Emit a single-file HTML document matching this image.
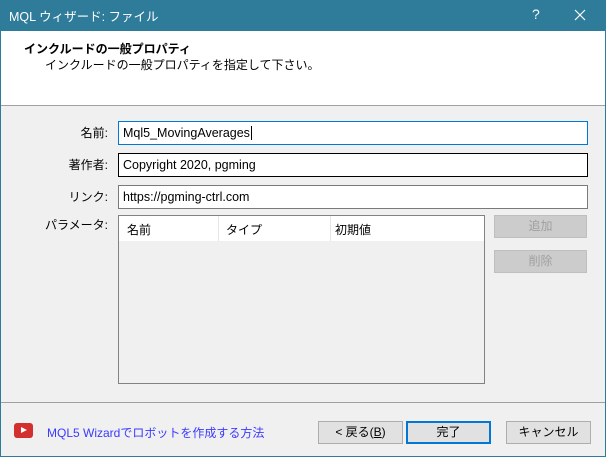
<!DOCTYPE html>
<html><head><meta charset="utf-8"><style>
*{margin:0;padding:0;box-sizing:border-box}
body{width:606px;height:457px;overflow:hidden;background:#f0f0f0;font-family:"Liberation Sans","Noto Sans CJK JP",sans-serif;font-size:12px;color:#000;position:relative}
.a{position:absolute}
.tb{left:0;top:0;width:606px;height:31px;background:#2e7b9a;color:#fff}
.win{left:0;top:0;width:606px;height:457px;border:1px solid #2e7b9a;pointer-events:none}
.inp{background:#fff;border:1px solid #7a7a7a;height:24px;padding:4px 0 0 4px;font-size:12.5px}
.lbl{text-align:right;width:70px;left:38px}
.btn{background:#e1e1e1;border:1px solid #adadad;text-align:center;line-height:21px;height:23px}
.dis{background:#cccccc;border:1px solid #bfbfbf;color:#a0a0a0}
</style></head><body>
<div class="a tb"><span class="a" style="left:9px;top:6px;font-size:12.5px">MQL ウィザード: ファイル</span><span class="a" style="left:532px;top:6px;font-size:14px">?</span>
<svg class="a" style="left:574px;top:9px" width="12" height="12"><path d="M1 1L11 11M11 1L1 11" stroke="#fff" stroke-width="1.2"/></svg></div>
<div class="a" style="left:1px;top:31px;width:604px;height:75px;background:#fff;border-bottom:1px solid #a0a0a0"></div>
<div class="a" style="left:24px;top:40px;font-weight:bold">インクルードの一般プロパティ</div>
<div class="a" style="left:45px;top:56px">インクルードの一般プロパティを指定して下さい。</div>
<div class="a lbl" style="top:124px">名前:</div>
<div class="a inp" style="left:118px;top:121px;width:470px;border-color:#0078d7">Mql5_MovingAverages<span style="border-left:1px solid #000;margin-left:1px"></span></div>
<div class="a lbl" style="top:156px">著作者:</div>
<div class="a inp" style="left:118px;top:153px;width:470px;border-color:#000">Copyright 2020, pgming</div>
<div class="a lbl" style="top:188px">リンク:</div>
<div class="a inp" style="left:118px;top:185px;width:470px">https://pgming-ctrl.com</div>
<div class="a lbl" style="top:216px">パラメータ:</div>
<div class="a" style="left:118px;top:215px;width:367px;height:169px;border:1px solid #828282;background:#f0f0f0">
<div class="a" style="left:0;top:0;width:365px;height:25px;background:#fff"></div>
<div class="a" style="left:99px;top:0;width:1px;height:25px;background:#e5e5e5"></div>
<div class="a" style="left:211px;top:0;width:1px;height:25px;background:#e5e5e5"></div>
<div class="a" style="left:8px;top:5px">名前</div><div class="a" style="left:107px;top:5px">タイプ</div><div class="a" style="left:216px;top:5px">初期値</div>
</div>
<div class="a btn dis" style="left:494px;top:215px;width:93px">追加</div>
<div class="a btn dis" style="left:494px;top:250px;width:93px">削除</div>
<div class="a" style="left:1px;top:402px;width:604px;height:1px;background:#a0a0a0"></div>
<div class="a" style="left:14px;top:423px;width:19px;height:15px;background:#d32f2f;border-radius:3px"><div class="a" style="left:7px;top:4px;border-left:6px solid #fff;border-top:3.5px solid transparent;border-bottom:3.5px solid transparent"></div></div>
<div class="a" style="left:47px;top:424px;color:#3a3aff">MQL5 Wizardでロボットを作成する方法</div>
<div class="a btn" style="left:318px;top:421px;width:85px">&lt; 戻る(<u>B</u>)</div>
<div class="a btn" style="left:406px;top:421px;width:85px;border:2px solid #0078d7;line-height:19px">完了</div>
<div class="a btn" style="left:506px;top:421px;width:85px">キャンセル</div>
<div class="a win"></div>
</body></html>
